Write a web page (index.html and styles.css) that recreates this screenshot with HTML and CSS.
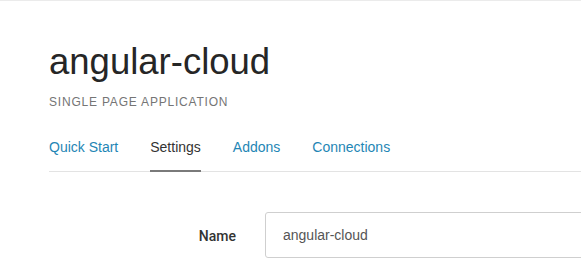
FILE: index.html
```html
<!DOCTYPE html>
<html lang="en">
<head>
    <meta charset="UTF-8">
    <meta name="viewport" content="width=device-width, initial-scale=1.0">
    <title>angular-cloud</title>
    <link rel="stylesheet" href="styles.css">
</head>
<body>

    <div class="page">
        <header class="app-header">
            <h1 class="app-title">angular-cloud</h1>
            <p class="app-type">Single Page Application</p>
        </header>

        <nav class="tabs">
            <a href="#" class="tab">Quick Start</a>
            <a href="#" class="tab active">Settings</a>
            <a href="#" class="tab">Addons</a>
            <a href="#" class="tab">Connections</a>
        </nav>

        <form class="settings-form">
            <div class="form-row">
                <label for="app-name" class="form-label">Name</label>
                <input type="text" id="app-name" class="form-input" value="angular-cloud">
            </div>
        </form>
    </div>

</body>
</html>
```

FILE: styles.css
```css
:root {
    --text-dark: #2b2b2b; --text-muted: #757575; --link-blue: #1f86b5;
    --line-color: #e3e3e3; --input-border: #cfcfcf;
}
* { box-sizing: border-box; margin: 0; padding: 0; }
body {
    font-family: 'Liberation Sans', Arial, sans-serif; background-color: #fff; color: var(--text-dark);
    border-top: 1px solid #ebebeb;
}
.page { padding: 39px 0 0 49px; overflow: hidden; }

.app-title { font-size: 36.5px; line-height: 44px; font-weight: 400; color: #262626; }
.app-type {
    margin-top: 10px; font-size: 12px; line-height: 16px; letter-spacing: 0.8px;
    text-transform: uppercase; color: var(--text-muted);
}

.tabs { display: flex; gap: 32px; margin-top: 27px; border-bottom: 1px solid var(--line-color); }
.tab {
    font-size: 14px; line-height: 20px; padding-bottom: 13px; margin-bottom: -1px;
    color: var(--link-blue); text-decoration: none; border-bottom: 2px solid transparent;
}
.tab.active { color: #333; border-bottom-color: #7a7a7a; }

.settings-form { margin-top: 40px; }
.form-row { display: grid; grid-template-columns: 187px 1fr; column-gap: 29px; align-items: center; }
.form-label {
    text-align: right; font-family: Roboto, 'Liberation Sans', sans-serif; font-size: 14px;
    font-weight: 500; color: #333; padding-top: 2px;
}
.form-input {
    height: 46px; padding: 0 17px; margin-right: -20px; border: 1px solid var(--input-border); border-radius: 3px;
    font-family: 'Liberation Sans', Arial, sans-serif; font-size: 14px; color: #555; outline: none;
}
```
